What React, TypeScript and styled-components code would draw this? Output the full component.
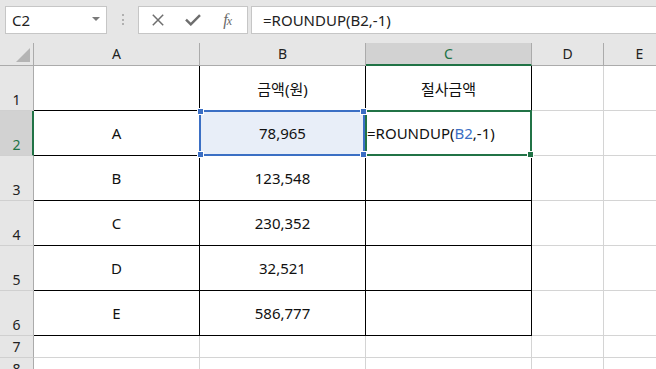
import React from 'react';
import styled, { createGlobalStyle, css } from 'styled-components';

const GlobalStyle = createGlobalStyle`
    html, body {
        margin: 0;
        padding: 0;
        background: #ffffff;
        overflow: hidden;
    }
    body {
        font-family: "Noto Sans", "Noto Sans CJK KR", sans-serif;
        color: #1f1f1f;
    }
`

const Window = styled.div`
    width: 656px;
    height: 369px;
    overflow: hidden;
    background: #ffffff;
`

const FormulaBar = styled.div`
    display: flex;
    align-items: flex-start;
    height: 43px;
    box-sizing: border-box;
    padding: 6px 0 0 5px;
    background: #e6e6e6;
`

const NameBox = styled.div`
    display: flex;
    align-items: center;
    justify-content: space-between;
    width: 102px;
    height: 28px;
    box-sizing: border-box;
    padding: 0 6px 0 6px;
    background: #ffffff;
    border: 1px solid #c6c6c6;
    font-size: 15px;
    color: #222;
`

const DropArrow = styled.span`
    width: 0;
    height: 0;
    border-left: 4px solid transparent;
    border-right: 4px solid transparent;
    border-top: 4px solid #7a7a7a;
    margin-top: -2px;
`

const Grip = styled.div`
    display: flex;
    flex-direction: column;
    align-items: center;
    gap: 2.5px;
    width: 31px;
    height: 28px;
    padding-top: 8px;
    box-sizing: border-box;

    span {
        width: 2px;
        height: 2px;
        background: #b0b0b0;
    }
`

const ButtonBox = styled.div`
    display: flex;
    align-items: center;
    justify-content: space-around;
    width: 110px;
    height: 28px;
    box-sizing: border-box;
    padding: 0 2px;
    background: #ffffff;
    border: 1px solid #c6c6c6;
`

const IconButton = styled.span`
    display: flex;
    align-items: center;
    justify-content: center;
    width: 28px;
    height: 26px;
    color: #6e6e6e;
`

const FxLabel = styled.span`
    font-family: "Liberation Serif", serif;
    font-style: italic;
    font-size: 16px;
    color: #6a6a6a;

    sub {
        font-size: 12px;
        vertical-align: baseline;
        margin-left: -1px;
    }
`

const FormulaInput = styled.div`
    flex: 1;
    display: flex;
    align-items: center;
    height: 28px;
    margin-left: 3px;
    margin-right: -4px;
    box-sizing: border-box;
    padding-left: 11px;
    background: #ffffff;
    border: 1px solid #c6c6c6;
    font-size: 15px;
    color: #222;
`

const Sheet = styled.div`
    display: grid;
    grid-template-columns: 34px 166px 166px 166px 72px 72px;
    grid-template-rows: 23px repeat(6, 45px) 22px 22px;
    background: #ffffff;
`

const Corner = styled.div`
    position: relative;
    background: #e6e6e6;
    border-right: 1px solid #ababab;
    border-bottom: 1px solid #ababab;
    box-sizing: border-box;

    &::after {
        content: '';
        position: absolute;
        right: 3px;
        bottom: 3px;
        width: 0;
        height: 0;
        border-left: 14px solid transparent;
        border-bottom: 14px solid #b4b4b4;
    }
`

const ColHead = styled.div<{ $active?: boolean }>`
    display: flex;
    align-items: center;
    justify-content: center;
    padding-bottom: 2px;
    box-sizing: border-box;
    background: #e6e6e6;
    border-right: 1px solid #ababab;
    border-bottom: 1px solid #ababab;
    font-size: 14px;
    color: #222;

    ${p => p.$active && css`
        background: #d2d2d2;
        color: #217346;
        border-bottom: 2px solid #217346;
        padding-top: 1px;
    `}
`

const RowHead = styled.div<{ $active?: boolean }>`
    display: flex;
    align-items: flex-end;
    justify-content: center;
    padding-bottom: 1px;
    box-sizing: border-box;
    background: #e6e6e6;
    border-right: 1px solid #ababab;
    border-bottom: 1px solid #d0d0d0;
    font-size: 14px;
    line-height: 18px;
    color: #222;

    ${p => p.$active && css`
        background: #d2d2d2;
        color: #217346;
        border-right: 2px solid #217346;
        padding-left: 1px;
    `}
`

const Cell = styled.div<{ $boxed?: boolean; $left?: boolean; $tint?: boolean }>`
    position: relative;
    display: flex;
    align-items: center;
    justify-content: ${p => (p.$left ? 'flex-start' : 'center')};
    padding-left: ${p => (p.$left ? '1px' : '0')};
    box-sizing: border-box;
    border-right: 1px solid ${p => (p.$boxed ? '#000000' : '#d4d4d4')};
    border-bottom: 1px solid ${p => (p.$boxed ? '#000000' : '#d4d4d4')};
    background: ${p => (p.$tint ? '#e8eef8' : '#ffffff')};
    font-size: 15px;
    color: #111;
    white-space: nowrap;
`

const RefSelection = styled.div`
    position: absolute;
    top: -1px;
    left: -1px;
    right: 0;
    bottom: -1px;
    border: 2px solid #3b6fc4;
    z-index: 3;
    pointer-events: none;
`

const ActiveSelection = styled.div`
    position: absolute;
    top: -1px;
    left: -1px;
    right: -1px;
    bottom: -1px;
    border: 2px solid #217346;
    z-index: 2;
    pointer-events: none;
`

const Handle = styled.span<{ $color: string; $x: 'left' | 'right'; $y: 'top' | 'bottom' }>`
    position: absolute;
    ${p => p.$x}: -4px;
    ${p => p.$y}: -4px;
    width: 5px;
    height: 5px;
    background: ${p => p.$color};
    border: 1px solid #ffffff;
`

const RefText = styled.span`
    color: #3b6fc4;
`

const columns = ['A', 'B', 'C', 'D', 'E']

const tableRows = [
    ['', '금액(원)', '절사금액'],
    ['A', '78,965', ''],
    ['B', '123,548', ''],
    ['C', '230,352', ''],
    ['D', '32,521', ''],
    ['E', '586,777', ''],
]

const CloseIcon = () => (
    <svg width="12" height="12" viewBox="0 0 12 12">
        <path d="M0.8 0.8 L11.2 11.2 M11.2 0.8 L0.8 11.2" stroke="#6e6e6e" strokeWidth="1.5" fill="none" />
    </svg>
)

const CheckIcon = () => (
    <svg width="16" height="12" viewBox="0 0 16 12">
        <path d="M1 5.6 L5.8 10.4 L15 1.2" stroke="#6e6e6e" strokeWidth="2.4" fill="none" />
    </svg>
)

const Formula = () => (
    <>=ROUNDUP(<RefText>B2</RefText>,-1)</>
)

const App = () => {
    return (
        <Window>
            <GlobalStyle />
            <FormulaBar>
                <NameBox>
                    C2
                    <DropArrow />
                </NameBox>
                <Grip>
                    <span />
                    <span />
                    <span />
                </Grip>
                <ButtonBox>
                    <IconButton><CloseIcon /></IconButton>
                    <IconButton><CheckIcon /></IconButton>
                    <IconButton><FxLabel>f<sub>x</sub></FxLabel></IconButton>
                </ButtonBox>
                <FormulaInput>=ROUNDUP(B2,-1)</FormulaInput>
            </FormulaBar>
            <Sheet>
                <Corner />
                {columns.map(col => (
                    <ColHead key={col} $active={col === 'C'}>{col}</ColHead>
                ))}

                {tableRows.map((row, r) => {
                    const rowNo = r + 1
                    return (
                        <React.Fragment key={rowNo}>
                            <RowHead $active={rowNo === 2}>{rowNo}</RowHead>
                            {row.map((value, c) => {
                                const isRef = rowNo === 2 && c === 1
                                const isActive = rowNo === 2 && c === 2
                                return (
                                    <Cell key={c} $boxed $tint={isRef} $left={isActive}>
                                        {isActive ? <Formula /> : value}
                                        {isRef && (
                                            <RefSelection>
                                                <Handle $color="#3b6fc4" $x="left" $y="top" />
                                                <Handle $color="#3b6fc4" $x="right" $y="top" />
                                                <Handle $color="#3b6fc4" $x="left" $y="bottom" />
                                                <Handle $color="#3b6fc4" $x="right" $y="bottom" />
                                            </RefSelection>
                                        )}
                                        {isActive && (
                                            <ActiveSelection>
                                                <Handle $color="#217346" $x="right" $y="bottom" />
                                            </ActiveSelection>
                                        )}
                                    </Cell>
                                )
                            })}
                            <Cell />
                            <Cell />
                        </React.Fragment>
                    )
                })}

                {[7, 8].map(rowNo => (
                    <React.Fragment key={rowNo}>
                        <RowHead>{rowNo}</RowHead>
                        {columns.map(col => <Cell key={col} />)}
                    </React.Fragment>
                ))}
            </Sheet>
        </Window>
    )
}

export default App
